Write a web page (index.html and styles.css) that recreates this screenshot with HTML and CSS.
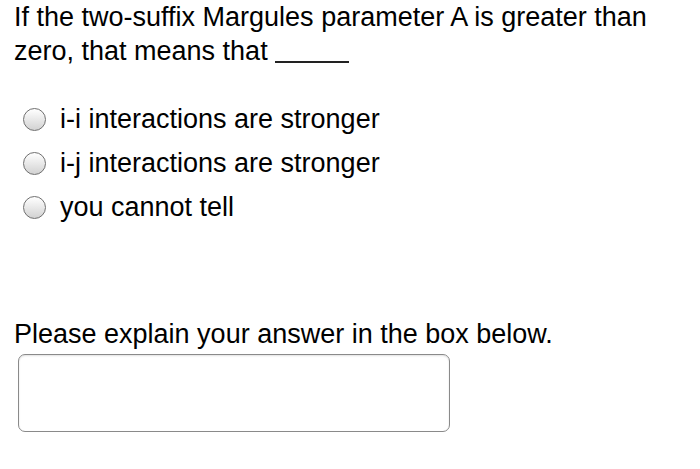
FILE: index.html
```html
<!DOCTYPE html>
<html>
<head>
<meta charset="utf-8">
<link rel="stylesheet" href="styles.css">
</head>
<body>
<div class="page">
  <p class="question">If the two-suffix Margules parameter A is greater than zero, that means that <span class="blank"></span></p>
  <ul class="options">
    <li class="option"><span class="radio"></span><span class="label">i-i interactions are stronger</span></li>
    <li class="option"><span class="radio"></span><span class="label">i-j interactions are stronger</span></li>
    <li class="option"><span class="radio"></span><span class="label">you cannot tell</span></li>
  </ul>
  <p class="explain">Please explain your answer in the box below.</p>
  <div class="answer-box"></div>
</div>
</body>
</html>
```
FILE: styles.css
```css
html, body {
  margin: 0;
  padding: 0;
  background: #ffffff;
}
.page {
  font-family: "Liberation Sans", Arial, sans-serif;
  color: #000;
  font-size: 27px;
  padding: 0 0 0 14px;
}
.question {
  margin: 0;
  line-height: 34px;
  width: 650px;
}
.blank {
  display: inline-block;
  width: 74px;
  border-bottom: 2px solid #222;
  vertical-align: -3px;
}
.options {
  list-style: none;
  margin: 29px 0 0 0;
  padding: 0;
}
.option {
  display: flex;
  align-items: center;
  height: 44px;
}
.radio {
  width: 21px;
  height: 21px;
  border-radius: 50%;
  border: 1px solid #6f6f6f;
  background: linear-gradient(#ffffff, #d2d2d2);
  margin: 0 14px 0 9px;
  flex: none;
}
.label {
  line-height: 44px;
}
.explain {
  margin: 90px 0 0 0;
  line-height: 30px;
}
.answer-box {
  margin: 5px 0 0 4px;
  width: 430px;
  height: 76px;
  border: 1.5px solid #8a8a8a;
  border-radius: 7px;
  box-shadow: inset 0 1px 2px rgba(0,0,0,0.12);
}
```
